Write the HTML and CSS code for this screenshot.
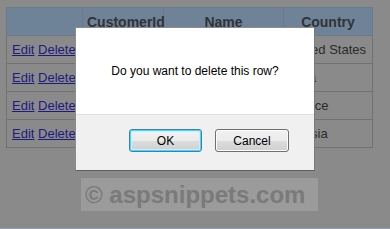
FILE: index.html
```html
<!DOCTYPE html>
<html>
<head>
<meta charset="utf-8">
<link rel="stylesheet" href="styles.css">
</head>
<body>
<div class="page">
  <table class="grid">
    <colgroup>
      <col class="c1"><col class="c2"><col class="c3"><col class="c4">
    </colgroup>
    <thead>
      <tr><th></th><th>CustomerId</th><th>Name</th><th>Country</th></tr>
    </thead>
    <tbody>
      <tr><td><a href="#">Edit</a> <a href="#">Delete</a></td><td>1</td><td>John Hammond</td><td>United States</td></tr>
      <tr><td><a href="#">Edit</a> <a href="#">Delete</a></td><td>2</td><td>Mudassar Khan</td><td>India</td></tr>
      <tr><td><a href="#">Edit</a> <a href="#">Delete</a></td><td>3</td><td>Suzanne Mathews</td><td>France</td></tr>
      <tr><td><a href="#">Edit</a> <a href="#">Delete</a></td><td>4</td><td>Robert Schidner</td><td>Russia</td></tr>
    </tbody>
  </table>
</div>
<div class="watermark">© aspsnippets.com</div>
<div class="dialog">
  <div class="msg">Do you want to delete this row?</div>
  <div class="actions">
    <button class="btn btn-default">OK</button>
    <button class="btn">Cancel</button>
  </div>
</div>
<div class="bottomline"></div>
</body>
</html>
```
FILE: styles.css
```css
html, body {
  margin: 0;
  padding: 0;
  height: 229px;
  overflow: hidden;
}
body {
  background: #8a8a8a;
  font-family: "Liberation Sans", Arial, sans-serif;
  position: relative;
}
.page {
  padding: 7px 0 0 6px;
}
.grid {
  border-collapse: collapse;
  table-layout: fixed;
  width: 366px;
  font-size: 13px;
  border: 1px solid #6e6e6e;
}
.c1 { width: 76px; }
.c2 { width: 81px; }
.c3 { width: 120px; }
.c4 { width: 89px; }
.grid th {
  background: #6f8398;
  color: #2f3337;
  font-weight: bold;
  font-size: 14px;
  height: 27px;
  padding: 0 4px;
  border: 1px solid #6a7a8a;
  text-align: center;
  white-space: nowrap;
}
.grid td {
  height: 27px;
  padding: 0 4px 0 5px;
  border: 1px solid #727272;
  color: #2a2a2a;
  white-space: nowrap;
  overflow: hidden;
}
.grid td:last-child {
  padding-left: 4px;
}
.grid a {
  color: #1e1a80;
  text-decoration: underline;
}
.watermark {
  position: absolute;
  left: 81px;
  top: 178px;
  width: 237px;
  height: 33px;
  box-sizing: border-box;
  padding-left: 4px;
  background: #9b9b9b;
  color: #7a7a7a;
  font-weight: bold;
  font-size: 24px;
  line-height: 33px;
  white-space: nowrap;
}
.dialog {
  position: absolute;
  left: 75px;
  top: 27px;
  width: 238px;
  height: 142px;
  background: #fff;
  border: 1px solid #8c8c8c;
  border-bottom-color: #5e5e5e;
  border-right-color: #7a7a7a;
  display: flex;
  flex-direction: column;
}
.msg {
  height: 86px;
  display: flex;
  align-items: center;
  justify-content: center;
  font-size: 12px;
  color: #000;
}
.actions {
  flex: 1;
  background: #f0f0f0;
  border-top: 1px solid #dfdfdf;
  display: flex;
  justify-content: flex-end;
  align-items: flex-start;
  gap: 13px;
  padding: 14px 25px 0 0;
}
.btn {
  width: 74px;
  height: 23px;
  margin: 0;
  padding: 0;
  font-family: "Liberation Sans", Arial, sans-serif;
  font-size: 12px;
  color: #000;
  border: 1px solid #707070;
  border-radius: 3px;
  background: linear-gradient(to bottom, #f2f2f2 0%, #ebebeb 50%, #dddddd 51%, #cfcfcf 100%);
  box-shadow: inset 0 0 0 1px #fcfcfc;
}
.btn-default {
  width: 73px;
  border-color: #3c7fb1;
  box-shadow: inset 0 0 0 1px #48d7ff, inset 0 0 0 2px #c8f0ff;
  background: linear-gradient(to bottom, #eaf6fd 0%, #d9f0fc 50%, #bee6fd 51%, #a7d9f5 100%);
}
.btn-default {
  background: linear-gradient(to bottom, #f2f2f2 0%, #ebebeb 50%, #dddddd 51%, #cfcfcf 100%);
}
.bottomline {
  position: absolute;
  left: 0;
  right: 0;
  bottom: 0;
  height: 1px;
  background: #8ea2b6;
}
```
